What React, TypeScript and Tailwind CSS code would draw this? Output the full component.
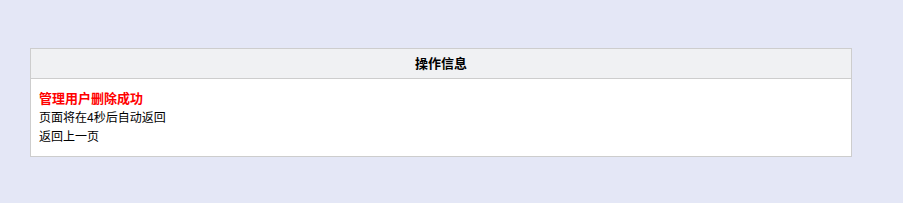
export default function App() {
  return (
    <div
      className="min-h-[203px] bg-[#e4e7f6] pt-[48px] pl-[30px]"
      style={{ fontFamily: '"Liberation Sans", "Noto Sans CJK SC", sans-serif' }}
    >
      <div className="w-[822px] border border-[#cdcdcd] bg-white">
        <div className="flex h-[30px] items-center justify-center border-b border-[#cdcdcd] bg-[#f0f1f3] text-[13px] font-bold text-black">
          操作信息
        </div>
        <div className="px-[8px] pt-[10px] pb-[8px] text-[12px] leading-[19.5px] text-black">
          <div className="text-[13px] font-bold text-[#ff0000]">管理用户删除成功</div>
          <div>
            页面将在<span>4</span>秒后自动返回
          </div>
          <div>返回上一页</div>
        </div>
      </div>
    </div>
  );
}
